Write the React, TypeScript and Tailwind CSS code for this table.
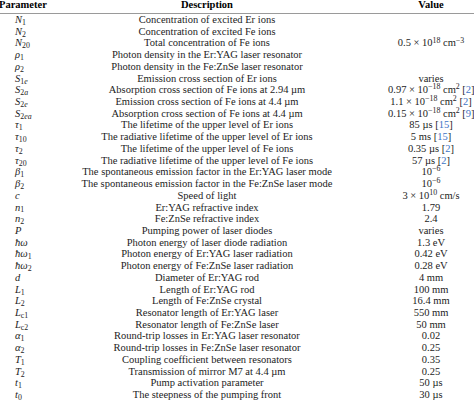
import type { ReactNode } from 'react'

type Row = { sym: ReactNode; desc: string; value?: ReactNode }

const Ref = ({ n }: { n: number }) => <span className="text-[#3d74c6]">{n}</span>

const cite = (n: number) => (
  <>
    {' '}[<Ref n={n} />]
  </>
)

const sci = (m: string, exp: string, unit?: ReactNode) => (
  <>
    {m} × 10<sup>{exp}</sup>
    {unit}
  </>
)

const ROWS: Row[] = [
  { sym: <><i>N</i><sub>1</sub></>, desc: 'Concentration of excited Er ions' },
  { sym: <><i>N</i><sub>2</sub></>, desc: 'Concentration of excited Fe ions' },
  {
    sym: <><i>N</i><sub>20</sub></>,
    desc: 'Total concentration of Fe ions',
    value: sci('0.5', '18', <> cm<sup>−3</sup></>),
  },
  { sym: <><i>ρ</i><sub>1</sub></>, desc: 'Photon density in the Er:YAG laser resonator' },
  { sym: <><i>ρ</i><sub>2</sub></>, desc: 'Photon density in the Fe:ZnSe laser resonator' },
  { sym: <><i>S</i><sub>1<i>e</i></sub></>, desc: 'Emission cross section of Er ions', value: 'varies' },
  {
    sym: <><i>S</i><sub>2<i>a</i></sub></>,
    desc: 'Absorption cross section of Fe ions at 2.94 µm',
    value: <>{sci('0.97', '−18', <> cm<sup>2</sup></>)}{cite(2)}</>,
  },
  {
    sym: <><i>S</i><sub>2<i>e</i></sub></>,
    desc: 'Emission cross section of Fe ions at 4.4 µm',
    value: <>{sci('1.1', '−18', <> cm<sup>2</sup></>)}{cite(2)}</>,
  },
  {
    sym: <><i>S</i><sub>2<i>ea</i></sub></>,
    desc: 'Absorption cross section of Fe ions at 4.4 µm',
    value: <>{sci('0.15', '−18', <> cm<sup>2</sup></>)}{cite(9)}</>,
  },
  { sym: <><i>τ</i><sub>1</sub></>, desc: 'The lifetime of the upper level of Er ions', value: <>85 µs{cite(15)}</> },
  {
    sym: <><i>τ</i><sub>10</sub></>,
    desc: 'The radiative lifetime of the upper level of Er ions',
    value: <>5 ms{cite(15)}</>,
  },
  { sym: <><i>τ</i><sub>2</sub></>, desc: 'The lifetime of the upper level of Fe ions', value: <>0.35 µs{cite(2)}</> },
  {
    sym: <><i>τ</i><sub>20</sub></>,
    desc: 'The radiative lifetime of the upper level of Fe ions',
    value: <>57 µs{cite(2)}</>,
  },
  {
    sym: <><i>β</i><sub>1</sub></>,
    desc: 'The spontaneous emission factor in the Er:YAG laser mode',
    value: <>10<sup>−6</sup></>,
  },
  {
    sym: <><i>β</i><sub>2</sub></>,
    desc: 'The spontaneous emission factor in the Fe:ZnSe laser mode',
    value: <>10<sup>−6</sup></>,
  },
  { sym: <i>c</i>, desc: 'Speed of light', value: sci('3', '10', ' cm/s') },
  { sym: <><i>n</i><sub>1</sub></>, desc: 'Er:YAG refractive index', value: '1.79' },
  { sym: <><i>n</i><sub>2</sub></>, desc: 'Fe:ZnSe refractive index', value: '2.4' },
  { sym: <i>P</i>, desc: 'Pumping power of laser diodes', value: 'varies' },
  { sym: <i>ħω</i>, desc: 'Photon energy of laser diode radiation', value: '1.3 eV' },
  { sym: <><i>ħω</i><sub>1</sub></>, desc: 'Photon energy of Er:YAG laser radiation', value: '0.42 eV' },
  { sym: <><i>ħω</i><sub>2</sub></>, desc: 'Photon energy of Fe:ZnSe laser radiation', value: '0.28 eV' },
  { sym: <i>d</i>, desc: 'Diameter of Er:YAG rod', value: '4 mm' },
  { sym: <><i>L</i><sub>1</sub></>, desc: 'Length of Er:YAG rod', value: '100 mm' },
  { sym: <><i>L</i><sub>2</sub></>, desc: 'Length of Fe:ZnSe crystal', value: '16.4 mm' },
  { sym: <><i>L</i><sub>c1</sub></>, desc: 'Resonator length of Er:YAG laser', value: '550 mm' },
  { sym: <><i>L</i><sub>c2</sub></>, desc: 'Resonator length of Fe:ZnSe laser', value: '50 mm' },
  { sym: <><i>α</i><sub>1</sub></>, desc: 'Round-trip losses in Er:YAG laser resonator', value: '0.02' },
  { sym: <><i>α</i><sub>2</sub></>, desc: 'Round-trip losses in Fe:ZnSe laser resonator', value: '0.25' },
  { sym: <><i>T</i><sub>1</sub></>, desc: 'Coupling coefficient between resonators', value: '0.35' },
  { sym: <><i>T</i><sub>2</sub></>, desc: 'Transmission of mirror M7 at 4.4 µm', value: '0.25' },
  { sym: <><i>t</i><sub>1</sub></>, desc: 'Pump activation parameter', value: '50 µs' },
  { sym: <><i>t</i><sub>0</sub></>, desc: 'The steepness of the pumping front', value: '30 µs' },
]

export default function App() {
  return (
    <div className="h-[403px] w-[474px] overflow-hidden bg-white font-['Liberation_Serif',serif] text-[10.5px] text-[#1c1c1c]">
      {/* header */}
      <div className="-mt-px flex h-[15px] border-b border-[#9a9a9a] font-bold leading-[12px] text-black">
        <div className="-ml-px w-[61px]">Parameter</div>
        <div className="w-[294px] text-center">Description</div>
        <div className="ml-[34px] w-[86px] text-center">Value</div>
      </div>

      {/* body */}
      <div className="flex flex-col">
        {ROWS.map((row, i) => (
          <div key={i} className="flex h-[11.73px] leading-[11.73px] whitespace-nowrap">
            <div className="w-[60px] pl-[15px]">{row.sym}</div>
            <div className="w-[294px] text-center">{row.desc}</div>
            <div className="ml-[34px] w-[86px] text-center">{row.value}</div>
          </div>
        ))}
      </div>
    </div>
  )
}
